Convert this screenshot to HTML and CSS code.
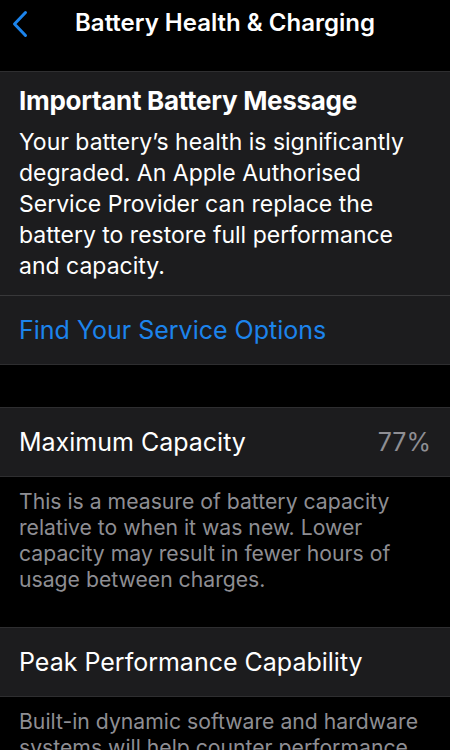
FILE: index.html
```html
<!DOCTYPE html>
<html lang="en">
<head>
<meta charset="utf-8">
<title>Battery Health &amp; Charging</title>
<link rel="stylesheet" href="styles.css">
</head>
<body>
<header class="nav">
  <a class="back" href="#" aria-label="Back">
    <svg width="18" height="28" viewBox="0 0 18 28"><path d="M15.5 2.5 L4.5 14 L15.5 25.5" fill="none" stroke="#1c84ec" stroke-width="3" stroke-linecap="round" stroke-linejoin="round"/></svg>
  </a>
  <h1 class="nav-title">Battery Health &amp; Charging</h1>
</header>
<main class="list">
  <section class="group">
    <div class="message">
      <h2 class="message-title">Important Battery Message</h2>
      <p class="message-body">Your battery’s health is significantly degraded. An Apple Authorised Service Provider can replace the battery to restore full performance and capacity.</p>
    </div>
    <div class="row row-link">Find Your Service Options</div>
  </section>
  <section class="group group-spaced">
    <div class="row"><span>Maximum Capacity</span><span class="value">77%</span></div>
  </section>
  <p class="footer">This is a measure of battery capacity relative to when it was new. Lower capacity may result in fewer hours of usage between charges.</p>
  <section class="group">
    <div class="row"><span>Peak Performance Capability</span></div>
  </section>
  <p class="footer">Built-in dynamic software and hardware systems will help counter performance impacts that may be noticed as your iPhone battery chemically ages.</p>
</main>
</body>
</html>
```
FILE: styles.css
```css
html, body {
  margin: 0;
  padding: 0;
  background: #000;
  color: #fff;
  font-family: Inter, "Noto Sans", "Liberation Sans", sans-serif;
  overflow: hidden;
}
.nav {
  position: relative;
  height: 44px;
  display: flex;
  align-items: center;
  justify-content: center;
}
.back {
  position: absolute;
  left: 10px;
  top: 10px;
  display: block;
  width: 18px;
  height: 28px;
}
.nav-title {
  margin: 0;
  font-size: 24px;
  font-weight: 600;
}
.list {
  padding-top: 27px;
}
.group {
  background: #1c1c1e;
  border-top: 1px solid #2e2e30;
  border-bottom: 1px solid #2e2e30;
}
.group-spaced {
  margin-top: 42px;
}
.message {
  padding: 13px 19px 13px 19px;
  border-bottom: 1px solid #38383a;
}
.message-title {
  margin: 0;
  font-size: 26px;
  line-height: 32px;
  font-weight: 700;
  letter-spacing: -0.3px;
}
.message-body {
  margin: 10px 0 0;
  font-size: 23px;
  line-height: 31px;
}
.row {
  display: flex;
  align-items: center;
  justify-content: space-between;
  height: 68px;
  padding: 0 19px;
  font-size: 25px;
}
.value {
  color: #8e8e93;
}
.row-link {
  color: #1c84ec;
}
.footer {
  margin: 0;
  padding: 11px 19px 35px;
  font-size: 21.2px;
  line-height: 26px;
  color: #8e8e93;
}
```
